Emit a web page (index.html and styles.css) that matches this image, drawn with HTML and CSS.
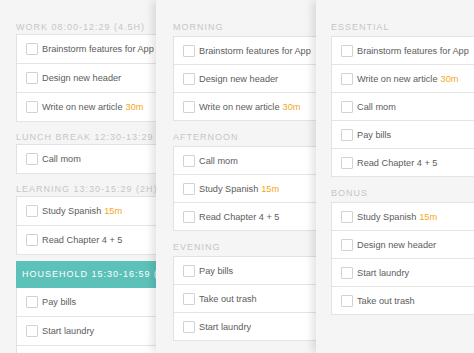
FILE: index.html
```html
<!DOCTYPE html>
<html lang="en">
<head>
    <meta charset="UTF-8">
    <meta name="viewport" content="width=device-width, initial-scale=1.0">
    <title>Day Planner</title>
    <link rel="stylesheet" href="styles.css">
</head>
<body>

    <!-- Three stacked planner sheets -->
    <div class="sheets">

        <!-- Sheet 1: time blocks -->
        <div class="sheet sheet-first">
            <div class="group-title">Work 08:00-12:29 (4.5H)</div>
            <div class="task-box">
                <div class="task"><span class="check"></span>Brainstorm features for App</div>
                <div class="task"><span class="check"></span>Design new header</div>
                <div class="task"><span class="check"></span>Write on new article <span class="dur">30m</span></div>
            </div>
            <div class="group-title">Lunch Break 12:30-13:29 (1H)</div>
            <div class="task-box">
                <div class="task"><span class="check"></span>Call mom</div>
            </div>
            <div class="group-title">Learning 13:30-15:29 (2H)</div>
            <div class="task-box">
                <div class="task"><span class="check"></span>Study Spanish <span class="dur">15m</span></div>
                <div class="task"><span class="check"></span>Read Chapter 4 + 5</div>
            </div>
            <div class="group-title active">Household 15:30-16:59 (1.5H)</div>
            <div class="task-box flush">
                <div class="task"><span class="check"></span>Pay bills</div>
                <div class="task"><span class="check"></span>Start laundry</div>
                <div class="task"><span class="check"></span>Take out trash</div>
            </div>
        </div>

        <!-- Sheet 2: parts of the day -->
        <div class="sheet">
            <div class="group-title">Morning</div>
            <div class="task-box">
                <div class="task"><span class="check"></span>Brainstorm features for App</div>
                <div class="task"><span class="check"></span>Design new header</div>
                <div class="task"><span class="check"></span>Write on new article <span class="dur">30m</span></div>
            </div>
            <div class="group-title">Afternoon</div>
            <div class="task-box">
                <div class="task"><span class="check"></span>Call mom</div>
                <div class="task"><span class="check"></span>Study Spanish <span class="dur">15m</span></div>
                <div class="task"><span class="check"></span>Read Chapter 4 + 5</div>
            </div>
            <div class="group-title">Evening</div>
            <div class="task-box">
                <div class="task"><span class="check"></span>Pay bills</div>
                <div class="task"><span class="check"></span>Take out trash</div>
                <div class="task"><span class="check"></span>Start laundry</div>
            </div>
        </div>

        <!-- Sheet 3: priorities -->
        <div class="sheet sheet-last">
            <div class="group-title">Essential</div>
            <div class="task-box">
                <div class="task"><span class="check"></span>Brainstorm features for App</div>
                <div class="task"><span class="check"></span>Write on new article <span class="dur">30m</span></div>
                <div class="task"><span class="check"></span>Call mom</div>
                <div class="task"><span class="check"></span>Pay bills</div>
                <div class="task"><span class="check"></span>Read Chapter 4 + 5</div>
            </div>
            <div class="group-title">Bonus</div>
            <div class="task-box">
                <div class="task"><span class="check"></span>Study Spanish <span class="dur">15m</span></div>
                <div class="task"><span class="check"></span>Design new header</div>
                <div class="task"><span class="check"></span>Start laundry</div>
                <div class="task"><span class="check"></span>Take out trash</div>
            </div>
        </div>

    </div>

</body>
</html>
```

FILE: styles.css
```css
body {
    margin: 0;
    font-family: "Liberation Sans", Arial, Helvetica, sans-serif;
    background: #f5f5f5;
    color: #5c5c5c;
    overflow: hidden;
}

/* row of sheets, each one laid over the one before */
.sheets {
    display: flex;
    height: 353px;
}

.sheet {
    width: 160px;
    flex-shrink: 0;
    height: 353px;
    padding: 18px 0 0 17px;
    box-sizing: border-box;
    background: #f5f5f5;
    overflow: hidden;
    position: relative;
    box-shadow: -3px 0 9px rgba(0, 0, 0, 0.13);
}

.sheet-first {
    width: 156px;
    padding: 20px 0 0 16px;
    box-shadow: none;
}

.sheet-last {
    width: 158px;
    padding-left: 15px;
}

.group-title {
    height: 18px;
    line-height: 18px;
    font-size: 9px;
    letter-spacing: 1px;
    text-transform: uppercase;
    color: #c6c6c6;
    white-space: nowrap;
}

.task-box + .group-title {
    margin-top: 7px;
}

.sheet-first .group-title {
    height: 14px;
    line-height: 14px;
}

.sheet-first .task-box + .group-title {
    margin-top: 8px;
}

.sheet-first .group-title.active {
    margin-top: 6px;
    height: 27px;
    line-height: 27px;
    padding-left: 6px;
    width: 200px;
    background: #5cc2b9;
    color: #fff;
}

.task-box {
    width: 190px;
    background: #fff;
    border: 1px solid #e2e2e2;
    border-bottom: none;
}

.task-box.flush {
    border-top: none;
}

.task {
    display: flex;
    align-items: center;
    height: 28px;
    box-sizing: border-box;
    border-bottom: 1px solid #e4e4e4;
    padding-left: 9px;
    font-size: 9.2px;
    white-space: nowrap;
}

.sheet-first .task {
    height: 29px;
}

.check {
    width: 10px;
    height: 10px;
    border: 1px solid #d2d2d2;
    border-radius: 1px;
    background: #fff;
    margin-right: 4px;
    flex-shrink: 0;
}

.dur {
    color: #f5a623;
    margin-left: 3px;
}
```
